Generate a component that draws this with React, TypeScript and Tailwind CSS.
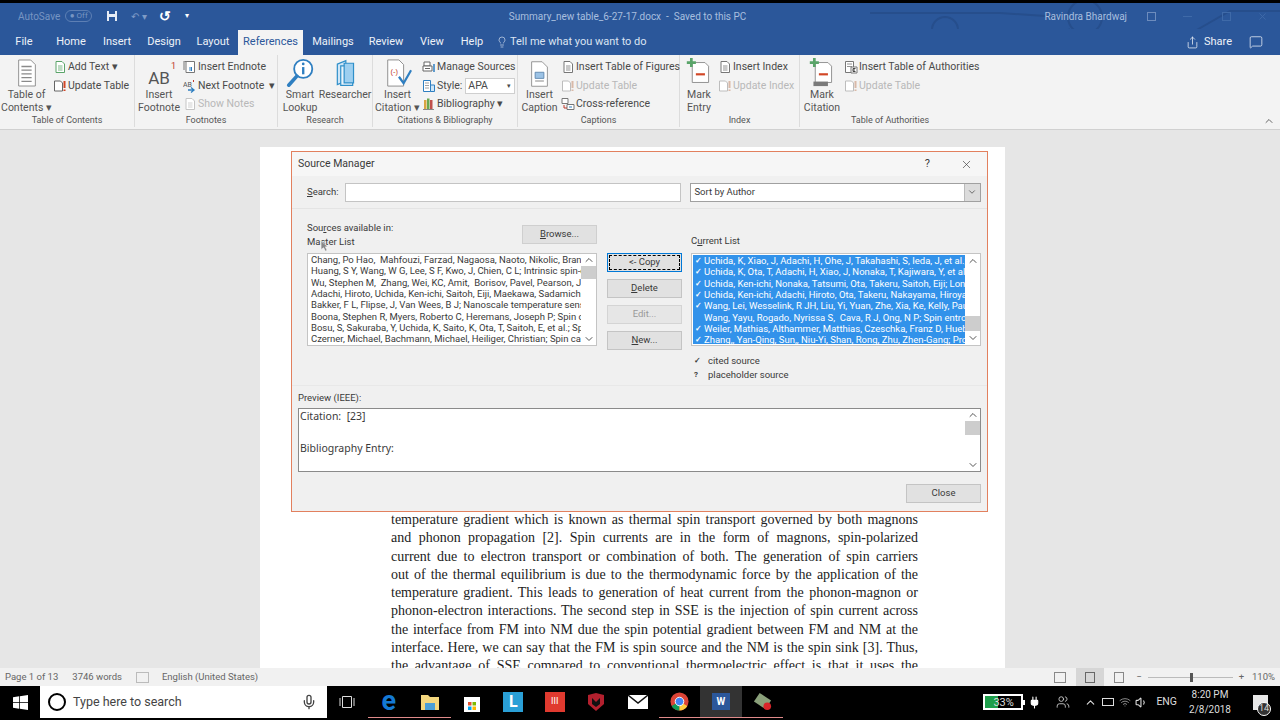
import { ChevronDown, ChevronUp, Lightbulb, MessageSquare, Mic, Plug, Share, Users, Volume1, Wifi, X } from "lucide-react";
import type { ReactNode } from "react";

const tabs = [
  ["Home", "w-[46px]"],
  ["Insert", "w-[46px]"],
  ["Design", "w-[48px]"],
  ["Layout", "w-[50px]"],
];
const tabsAfter = [
  ["Mailings", "w-[60px]"],
  ["Review", "w-[46px]"],
  ["View", "w-[46px]"],
  ["Help", "w-[34px]"],
];

const masterList = [
  "Chang, Po Hao,  Mahfouzi, Farzad, Nagaosa, Naoto, Nikolic, Branislav",
  "Huang, S Y, Wang, W G, Lee, S F, Kwo, J, Chien, C L; Intrinsic spin-dependent",
  "Wu, Stephen M,  Zhang, Wei, KC, Amit,  Borisov, Pavel, Pearson, John E",
  "Adachi, Hiroto, Uchida, Ken-ichi, Saitoh, Eiji, Maekawa, Sadamichi; The",
  "Bakker, F L, Flipse, J, Van Wees, B J; Nanoscale temperature sensing using",
  "Boona, Stephen R, Myers, Roberto C, Heremans, Joseph P; Spin caloritronics",
  "Bosu, S, Sakuraba, Y, Uchida, K, Saito, K, Ota, T, Saitoh, E, et al.; Spin Seebeck",
  "Czerner, Michael, Bachmann, Michael, Heiliger, Christian; Spin caloritronics",
];

const currentList = [
  [true, "Uchida, K, Xiao, J, Adachi, H, Ohe, J, Takahashi, S, Ieda, J, et al.; Spin Seebeck"],
  [true, "Uchida, K, Ota, T, Adachi, H, Xiao, J, Nonaka, T, Kajiwara, Y, et al.; Thermal"],
  [true, "Uchida, Ken-ichi, Nonaka, Tatsumi, Ota, Takeru, Saitoh, Eiji; Longitudinal"],
  [true, "Uchida, Ken-ichi, Adachi, Hiroto, Ota, Takeru, Nakayama, Hiroyasu, Maekawa"],
  [true, "Wang, Lei, Wesselink, R JH, Liu, Yi, Yuan, Zhe, Xia, Ke, Kelly, Paul J; Giant"],
  [false, "Wang, Yayu, Rogado, Nyrissa S,  Cava, R J, Ong, N P; Spin entropy as the"],
  [true, "Weiler, Mathias, Althammer, Matthias, Czeschka, Franz D, Huebl, Hans, Wagner"],
  [true, "Zhang,, Yan-Qing, Sun,, Niu-Yi, Shan, Rong, Zhu, Zhen-Gang; Proximity"],
] as const;

const pageLines = [
  "temperature gradient which is known as thermal spin transport governed by both magnons",
  "and phonon propagation [2]. Spin currents are in the form of magnons, spin-polarized",
  "current due to electron transport or combination of both. The generation of spin carriers",
  "out of the thermal equilibrium is due to the thermodynamic force by the application of the",
  "temperature gradient. This leads to generation of heat current from the phonon-magnon or",
  "phonon-electron interactions. The second step in SSE is the injection of spin current across",
  "the interface from FM into NM due the spin potential gradient between FM and NM at the",
  "interface. Here, we can say that the FM is spin source and the NM is the spin sink [3]. Thus,",
  "the advantage of SSE compared to conventional thermoelectric effect is that it uses the",
];

function DocIcon({ color = "#777" }: { color?: string }) {
  return (
    <svg viewBox="0 0 14 14" className="size-[14px] shrink-0" fill="none" stroke={color}>
      <path d="M3 1.500h6l2.500 2.500v8.500H3z" fill="#fff" />
      <path d="M5 6h4.500M5 8h4.500M5 10h4.500" strokeWidth="0.8" />
    </svg>
  );
}

function UpdateIcon({ disabled }: { disabled?: boolean }) {
  return (
    <svg viewBox="0 0 14 14" className="size-[14px] shrink-0" fill="none">
      <path d="M1.500 2h6l2 2v8h-8z" fill="#fff" stroke={disabled ? "#bdbdbd" : "#666"} />
      <path d="M11.500 2v7M11.500 10.500v1.500" stroke={disabled ? "#d9b9a8" : "#d24726"} strokeWidth="2" />
    </svg>
  );
}

function EndnoteIcon() {
  return (
    <svg viewBox="0 0 14 14" className="size-[14px] shrink-0" fill="none" stroke="#777">
      <path d="M1.500 1.500h9M3 1.500h8.500v11H3z" fill="#fff" />
      <path d="M1 1v9" />
      <path d="M7 7v4M8.500 7v4" stroke="#2f7fc1" />
    </svg>
  );
}

function NextFootnoteIcon() {
  return (
    <svg viewBox="0 0 14 14" className="size-[14px] shrink-0" fill="none">
      <text x="0" y="8" fontSize="7" fill="#555" fontFamily="Roboto, sans-serif">AB</text>
      <path d="M10.500 1v2" stroke="#c0392b" />
      <path d="M5 11h5M8 8.500l3 2.500-3 2.500" stroke="#2f7fc1" strokeWidth="1.300" />
    </svg>
  );
}

function ManageSourcesIcon() {
  return (
    <svg viewBox="0 0 14 14" className="size-[14px] shrink-0" fill="none" stroke="#666">
      <path d="M2 2h6v4H2z" fill="#fff" />
      <path d="M1 6h9v5H1z" fill="#fff" />
      <path d="M3 8.500h5" />
      <path d="M12 4v8" stroke="#2f7fc1" strokeWidth="1.500" />
    </svg>
  );
}

function StyleIcon() {
  return (
    <svg viewBox="0 0 14 14" className="size-[14px] shrink-0" fill="none" stroke="#2f7fc1">
      <path d="M1.500 1.500h7v11h-7z" fill="#fff" />
      <path d="M3 4h4M3 6.500h4M3 9h4" stroke="#888" strokeWidth="0.8" />
      <path d="M8.500 6h4v6.500h-4z" fill="#cfe6f7" />
    </svg>
  );
}

function BibliographyIcon() {
  return (
    <svg viewBox="0 0 14 14" className="size-[14px] shrink-0">
      <path d="M2 3h2.500v9H2z" fill="#d9a441" />
      <path d="M5 1.500h2.500V12H5z" fill="#6aa84f" />
      <path d="M8 3h2.500v9H8z" fill="#c0504d" />
      <path d="M1 12.500h11" stroke="#888" />
    </svg>
  );
}

function CrossRefIcon() {
  return (
    <svg viewBox="0 0 14 14" className="size-[14px] shrink-0" fill="none" stroke="#777">
      <path d="M1 1.500h6v5H1zM6 7.500h7v5H6z" fill="#fff" />
      <path d="M3 8v3h3" stroke="#c0392b" />
      <path d="M8 10h3" stroke="#2f7fc1" />
    </svg>
  );
}

function ToaIcon() {
  return (
    <svg viewBox="0 0 14 14" className="size-[14px] shrink-0" fill="none" stroke="#777">
      <path d="M1.500 1.500h8v11h-8z" fill="#fff" />
      <path d="M3 4h5M3 6.500h5" strokeWidth="0.8" />
      <path d="M7 7h6v6H7z" fill="#fff" />
      <path d="M11.500 8.500H9v3h2.500M9 10h2" stroke="#444" />
    </svg>
  );
}

function BigIcon({ kind }: { kind: string }) {
  if (kind === "toc")
    return (
      <svg viewBox="0 0 28 32" className="h-[30px] w-[26px]" fill="none">
        <path d="M5 2h13l5 5v23H5z" fill="#fff" stroke="#8a8a8a" />
        <path d="M8 9h11M8 13h11M8 17h11M8 21h11M8 25h11" stroke="#8a8a8a" strokeWidth="1.400" />
      </svg>
    );
  if (kind === "footnote")
    return (
      <div className="relative flex h-7 w-7 items-end justify-center text-[17px] leading-[20px] text-[#555]">
        AB
        <span className="absolute top-0 right-[-3px] text-[9px] leading-3 text-[#c0392b]">1</span>
      </div>
    );
  if (kind === "smart")
    return (
      <svg viewBox="0 0 32 34" className="h-[31px] w-[29px]" fill="none">
        <circle cx="19" cy="13" r="10" fill="#fff" stroke="#2f7fc1" strokeWidth="2" />
        <path d="M12 21 3 31" stroke="#2f7fc1" strokeWidth="4" strokeLinecap="round" />
        <path d="M19 11v8" stroke="#2f7fc1" strokeWidth="2.600" />
        <circle cx="19" cy="7.500" r="1.500" fill="#2f7fc1" />
      </svg>
    );
  if (kind === "researcher")
    return (
      <svg viewBox="0 0 28 34" className="h-[29px] w-6" fill="none">
        <path d="M5 6 15 2v24L5 30z" fill="#cfe6f7" stroke="#2f8fc9" strokeWidth="1.400" />
        <path d="M9 8h14v23H9z" fill="#e8f3fb" stroke="#2f8fc9" strokeWidth="1.400" />
        <path d="M13 5h11v23H13z" fill="#9dcff0" stroke="#2f8fc9" strokeWidth="1.400" />
      </svg>
    );
  if (kind === "citation")
    return (
      <svg viewBox="0 0 30 32" className="h-[30px] w-7" fill="none">
        <path d="M4 2h12l5 5v23H4z" fill="#fff" stroke="#8a8a8a" />
        <text x="7" y="17" fontSize="8" fill="#c0392b" fontFamily="Liberation Sans, sans-serif">(-)</text>
        <path d="m16 20 5 7 8-14" stroke="#2f7fc1" strokeWidth="2.400" />
      </svg>
    );
  if (kind === "caption")
    return (
      <svg viewBox="0 0 24 32" className="h-[28px] w-[21px]" fill="none">
        <path d="M3 2h12l6 6v22H3z" fill="#fff" stroke="#8a8a8a" />
        <path d="M7 14h10v7H7z" fill="#9cc3e6" stroke="#5b85ad" />
        <path d="M7 24h10" stroke="#777" />
      </svg>
    );
  return (
    <svg viewBox="0 0 32 34" className="h-[31px] w-[29px]" fill="none">
      <path d="M8 6h14l4 4v18H8z" fill="#fff" stroke="#8a8a8a" />
      <path d="M12 19h10" stroke="#d24726" strokeWidth="2.400" />
      <path d="M7 1v10M2 6h10" stroke="#5aa469" strokeWidth="3" />
      {kind === "markCitation" ? <path d="M6 27h16v5H6z" fill="#7a7a7a" /> : null}
    </svg>
  );
}

function BigButton({ kind, lines, width }: { kind: string; lines: string[]; width: string }) {
  return (
    <div className={`flex shrink-0 flex-col items-center ${width}`}>
      <div className="flex h-[31px] items-end">
        <BigIcon kind={kind} />
      </div>
      <div className="text-center text-[10.5px] leading-[13px] whitespace-nowrap text-[#555]">
        {lines.map((line) => (
          <div key={line}>{line}</div>
        ))}
      </div>
    </div>
  );
}

function SmallRow({ icon, children, disabled }: { icon: ReactNode; children: ReactNode; disabled?: boolean }) {
  return (
    <div
      className={`flex h-[18.5px] items-center gap-[1px] text-[10.5px] whitespace-nowrap ${disabled ? "text-[#b8b8b8]" : "text-[#4a4a4a]"}`}
    >
      {icon}
      <span>{children}</span>
    </div>
  );
}

function RibbonGroup({ label, width, children }: { label: string; width: string; children: ReactNode }) {
  return (
    <div className={`flex h-full shrink-0 flex-col border-r border-[#dcdcdc] ${width}`}>
      <div className="flex flex-1 pt-[2px]">{children}</div>
      <div className="h-[13px] text-center text-[9px] leading-[13px] text-[#555]">{label}</div>
    </div>
  );
}

function Ribbon() {
  return (
    <div className="flex h-[75px] shrink-0 items-stretch border-b border-[#d0d0d0] bg-[#f3f3f3] pb-[2px] shadow-[0_1px_2px_#bbb]">
      <RibbonGroup label="Table of Contents" width="w-[135px]">
        <BigButton kind="toc" lines={["Table of", "Contents ▾"]} width="w-[53px]" />
        <div className="flex flex-col pt-[1px]">
          <SmallRow icon={<DocIcon color="#5aa469" />}>Add Text ▾</SmallRow>
          <SmallRow icon={<UpdateIcon />}>Update Table</SmallRow>
        </div>
      </RibbonGroup>
      <RibbonGroup label="Footnotes" width="w-[143px]">
        <BigButton kind="footnote" lines={["Insert", "Footnote"]} width="w-[48px]" />
        <div className="flex flex-col pt-[1px]">
          <SmallRow icon={<EndnoteIcon />}>Insert Endnote</SmallRow>
          <SmallRow icon={<NextFootnoteIcon />}>Next Footnote &nbsp;▾</SmallRow>
          <SmallRow disabled icon={<DocIcon color="#c4c4c4" />}>Show Notes</SmallRow>
        </div>
      </RibbonGroup>
      <RibbonGroup label="Research" width="w-[95px]">
        <BigButton kind="smart" lines={["Smart", "Lookup"]} width="w-[44px]" />
        <BigButton kind="researcher" lines={["Researcher"]} width="w-[46px]" />
      </RibbonGroup>
      <RibbonGroup label="Citations & Bibliography" width="w-[145px]">
        <BigButton kind="citation" lines={["Insert", "Citation ▾"]} width="w-[49px]" />
        <div className="flex flex-col pt-[1px]">
          <SmallRow icon={<ManageSourcesIcon />}>Manage Sources</SmallRow>
          <SmallRow icon={<StyleIcon />}>
            <span className="flex items-center gap-[3px]">
              Style:
              <span className="flex h-4 w-[50px] items-center justify-between border border-[#cfcfcf] bg-white pr-[3px] pl-[2px]">
                APA <span className="text-[7px]">▾</span>
              </span>
            </span>
          </SmallRow>
          <SmallRow icon={<BibliographyIcon />}>Bibliography ▾</SmallRow>
        </div>
      </RibbonGroup>
      <RibbonGroup label="Captions" width="w-[162px]">
        <BigButton kind="caption" lines={["Insert", "Caption"]} width="w-[43px]" />
        <div className="flex flex-col pt-[1px]">
          <SmallRow icon={<DocIcon />}>Insert Table of Figures</SmallRow>
          <SmallRow disabled icon={<UpdateIcon disabled />}>Update Table</SmallRow>
          <SmallRow icon={<CrossRefIcon />}>Cross-reference</SmallRow>
        </div>
      </RibbonGroup>
      <RibbonGroup label="Index" width="w-[120px]">
        <BigButton kind="mark" lines={["Mark", "Entry"]} width="w-[38px]" />
        <div className="flex flex-col pt-[1px]">
          <SmallRow icon={<DocIcon />}>Insert Index</SmallRow>
          <SmallRow disabled icon={<UpdateIcon disabled />}>Update Index</SmallRow>
        </div>
      </RibbonGroup>
      <div className="flex h-full w-[180px] shrink-0 flex-col">
        <div className="flex flex-1 pt-[2px]">
          <BigButton kind="markCitation" lines={["Mark", "Citation"]} width="w-[44px]" />
          <div className="flex flex-col pt-[1px]">
            <SmallRow icon={<ToaIcon />}>Insert Table of Authorities</SmallRow>
            <SmallRow disabled icon={<UpdateIcon disabled />}>Update Table</SmallRow>
          </div>
        </div>
        <div className="h-[13px] text-center text-[9px] leading-[13px] text-[#555]">Table of Authorities</div>
      </div>
      <div className="flex flex-1 items-end justify-end pr-[5px]">
        <ChevronUp className="size-3 text-[#666]" />
      </div>
    </div>
  );
}

function ScrollBar({ thumbClass, thumbTop }: { thumbClass: string; thumbTop: string }) {
  return (
    <div className="flex w-[15px] shrink-0 flex-col items-center justify-between bg-white">
      <ChevronUp className="size-3 text-[#555]" />
      <div className={`w-full flex-1 ${thumbTop}`}>
        <div className={`w-full bg-[#cdcdcd] ${thumbClass}`} />
      </div>
      <ChevronDown className="size-3 text-[#555]" />
    </div>
  );
}

function DialogButton({ label, disabled, focused }: { label: ReactNode; disabled?: boolean; focused?: boolean }) {
  return (
    <div
      className={`flex h-[19px] w-[75px] items-center justify-center border text-[9.5px] ${
        focused
          ? "border-[#0078d7] bg-[#e1e1e1] outline-1 -outline-offset-3 outline-black outline-dashed"
          : disabled
            ? "border-[#d4d4d4] bg-[#e6e6e6] text-[#999]"
            : "border-[#c4c4c4] bg-[#e1e1e1]"
      }`}
    >
      {label}
    </div>
  );
}

function SourceManager() {
  return (
    <div className="absolute top-[151px] left-[291px] flex h-[361px] w-[697px] flex-col border border-[#e2805e] bg-[#f0f0f0] font-['Roboto',sans-serif] text-[9.5px] text-[#3a3a3a]">
      <div className="flex h-[24px] items-center justify-between bg-[#f6f6f6] pr-[14px] pl-[6px] text-[10.5px]">
        <span>Source Manager</span>
        <span className="flex items-center gap-[30px]">
          <span className="text-[11px]">?</span>
          <X className="size-[13px]" strokeWidth={1.2} />
        </span>
      </div>
      <div className="flex h-[33px] items-center border-b border-[#e4e4e4] pr-[6px] pl-[15px]">
        <span className="w-[38px]"><u>S</u>earch:</span>
        <div className="h-[19px] w-[337px] border border-[#c4c4c4] bg-white" />
        <div className="ml-[9px] flex h-[19px] w-[291px] items-center justify-between border border-[#a0a0a0] bg-white pl-[3px]">
          Sort by Author
          <span className="flex h-full w-[16px] items-center justify-center border-l border-[#bbb] bg-[#dcdcdc]">
            <ChevronDown className="size-[10px] text-[#555]" />
          </span>
        </div>
      </div>
      <div className="flex h-[177px] border-b border-[#e8e8e8] pt-[13px] pr-[6px] pl-[15px]">
        <div className="flex w-[290px] flex-col">
          <div className="flex h-[31px] items-start justify-between">
            <div className="leading-[14px]">
              <div className="mt-[-1px]">Sou<u>r</u>ces available in:</div>
              <div>Master List</div>
            </div>
            <div className="mt-[3px] flex h-[19px] w-[75px] items-center justify-center border border-[#cfcfcf] bg-[#e1e1e1]">
              <span><u>B</u>rowse...</span>
            </div>
          </div>
          <div className="flex h-[93px] border border-[#c4c4c4] bg-white pl-[3px]">
            <div className="min-w-0 flex-1 overflow-hidden leading-[11.35px]">
              {masterList.map((source) => (
                <div key={source} className="whitespace-pre">
                  {source}
                </div>
              ))}
            </div>
            <ScrollBar thumbClass="h-[13px]" thumbTop="" />
          </div>
        </div>
        <div className="ml-[10px] flex w-[74px] flex-col gap-[7px] pt-[31px]">
          <DialogButton focused label="<- Copy" />
          <DialogButton label={<span><u>D</u>elete</span>} />
          <DialogButton disabled label="Edit..." />
          <DialogButton label={<span><u>N</u>ew...</span>} />
        </div>
        <div className="ml-[10px] flex w-[290px] flex-col">
          <div className="flex h-[31px] items-end pb-[5px]"><span>C<u>u</u>rrent List</span></div>
          <div className="flex h-[93px] border border-[#c4c4c4] bg-white p-[1px] pr-0">
            <div className="min-w-0 flex-1 overflow-hidden bg-[#3292ea] pl-[2px] leading-[11.35px] text-white">
              {currentList.map(([cited, source]) => (
                <div key={source} className="flex whitespace-pre">
                  <span className="w-[9px] shrink-0 text-[8px] font-bold">{cited ? "✓" : ""}</span>
                  {source}
                </div>
              ))}
            </div>
            <ScrollBar thumbClass="h-[15px]" thumbTop="pt-[49px]" />
          </div>
          <div className="mt-[8px] pl-[3px] leading-[14px]">
            <div className="flex">
              <span className="w-[14px] text-[8px] font-bold">✓</span>cited source
            </div>
            <div className="flex">
              <span className="w-[14px] text-[8px] font-bold">?</span>placeholder source
            </div>
          </div>
        </div>
      </div>
      <div className="pt-[5px] pr-[6px] pl-[6px]">
        <div className="h-[17px] leading-[13px]">Preview (IEEE):</div>
        <div className="flex h-[64px] border border-[#8a8a8a] bg-white pl-[1px] font-['Noto_Sans',sans-serif] text-[10.5px] leading-[16px]">
          <div className="flex-1 pt-[-1px]">
            <div className="mt-[-1px]">Citation:&nbsp; [23]</div>
            <div className="h-4" />
            <div>Bibliography Entry:</div>
          </div>
          <ScrollBar thumbClass="h-[14px]" thumbTop="" />
        </div>
        <div className="mt-[12px] flex justify-end">
          <DialogButton label="Close" />
        </div>
      </div>
    </div>
  );
}

function TaskIcon({ children, active, open }: { children: ReactNode; active?: boolean; open?: boolean }) {
  return (
    <div
      className={`flex h-full w-[41.5px] items-center justify-center border-b ${active ? "bg-[#333]" : ""} ${active || open ? "border-[#e08a8a]" : "border-transparent"}`}
    >
      {children}
    </div>
  );
}

function Taskbar() {
  return (
    <div className="flex h-[32px] shrink-0 items-center bg-black text-white">
      <div className="flex h-full w-10 items-center justify-center">
        <svg viewBox="0 0 16 16" className="size-[15px]" fill="#fff">
          <path d="M0 2.300 6.500 1.400v6.200H0zM7.300 1.300 16 0v7.600H7.300zM0 8.400h6.500v6.200L0 13.700zM7.300 8.400H16V16l-8.700-1.300z" />
        </svg>
      </div>
      <div className="flex h-full w-[287px] items-center justify-between bg-white pr-[10px] pl-2 text-[#444]">
        <div className="flex items-center gap-[7px] text-[12.5px]">
          <span className="size-[18px] rounded-full border-[2.5px] border-black" />
          Type here to search
        </div>
        <Mic className="size-4 text-[#444]" />
      </div>
      <div className="flex h-full w-10 items-center justify-center">
        <svg viewBox="0 0 16 16" className="size-4" fill="none" stroke="#ddd">
          <path d="M3.500 2.500h9v11h-9zM1 4v8M15 4v8" />
        </svg>
      </div>
      <div className="flex h-full flex-1 items-center pl-[1px]">
        <TaskIcon open>
          <span className="text-[27px] leading-none font-bold text-[#1479d4]">e</span>
        </TaskIcon>
        <TaskIcon open>
          <svg viewBox="0 0 20 18" className="h-[18px] w-5">
            <path d="M1 2h7l2 2h9v13H1z" fill="#f4d77e" />
            <path d="M5 10h10v7H5z" fill="#4a9fd8" />
          </svg>
        </TaskIcon>
        <TaskIcon>
          <svg viewBox="0 0 20 20" className="size-5">
            <path d="M2 5h16v15H2z" fill="#fff" />
            <path d="M6 10h3.500v3.500H6z" fill="#e2502f" />
            <path d="M10.500 10H14v3.500h-3.500z" fill="#7fba00" />
            <path d="M6 14.500h3.500V18H6z" fill="#00a4ef" />
            <path d="M10.500 14.500H14V18h-3.500z" fill="#ffb900" />
          </svg>
        </TaskIcon>
        <TaskIcon>
          <span className="flex h-5 w-5 items-center justify-center bg-[#2a9fd6] text-[16px] leading-none font-bold">L</span>
        </TaskIcon>
        <TaskIcon>
          <span className="flex h-5 w-5 items-center justify-center bg-[#e03a2f] text-[9px]">III</span>
        </TaskIcon>
        <TaskIcon>
          <svg viewBox="0 0 18 20" className="h-5 w-[18px]">
            <path d="M1 3 9 1l8 2v9l-8 7-8-7z" fill="#b3202e" />
            <path d="m5 6 4 4 4-4v6l-4 3-4-3z" fill="#111" />
          </svg>
        </TaskIcon>
        <TaskIcon>
          <svg viewBox="0 0 20 16" className="h-4 w-5">
            <path d="M0 1h20v14H0z" fill="#fff" />
            <path d="m0 1 10 8 10-8" fill="none" stroke="#111" strokeWidth="1.500" />
          </svg>
        </TaskIcon>
        <TaskIcon open>
          <svg viewBox="0 0 20 20" className="size-[19px]">
            <circle cx="10" cy="10" r="9.500" fill="#db4437" />
            <path d="M10 10 1.700 14.800A9.500 9.500 0 0 0 10 19.500z" fill="#0f9d58" />
            <path d="M10 10l8.200 4.800A9.500 9.500 0 0 1 10 19.500z" fill="#ffcd40" />
            <circle cx="10" cy="10" r="4.500" fill="#4285f4" stroke="#fff" />
          </svg>
        </TaskIcon>
        <TaskIcon active>
          <span className="flex h-[17px] w-[18px] items-center justify-center bg-[#2b579a] text-[10px] font-bold">W</span>
        </TaskIcon>
        <TaskIcon open>
          <svg viewBox="0 0 20 20" className="size-[19px]">
            <path d="M7 1 19 9l-6 9L1 10z" fill="#8aa07a" />
            <circle cx="15" cy="15" r="4" fill="#d9252a" />
          </svg>
        </TaskIcon>
      </div>
      <div className="flex h-full items-center text-[#ddd]">
        <div className="flex h-[16px] w-[40px] items-center border-2 border-white text-[11px] leading-none">
          <span className="flex h-full w-[13px] shrink-0 bg-[#1e9e4a]" />
          <span className="ml-[-5px]">33%</span>
        </div>
        <span className="h-[5px] w-[2px] bg-white" />
        <Plug className="ml-[3px] size-[13px] fill-white text-white" />
        <Users className="ml-[15px] size-[14px]" strokeWidth={1.4} />
        <ChevronUp className="ml-[14px] size-[13px]" />
        <span className="ml-[5px] h-[8px] w-[12px] border border-[#ddd]" />
        <Wifi className="ml-[5px] size-[12px] text-[#888]" />
        <Volume1 className="ml-[4px] size-[13px]" />
        <span className="ml-[8px] text-[10.5px]">ENG</span>
        <div className="ml-[14px] flex w-[38px] flex-col items-center text-[10px] leading-[15px]">
          <span>8:20 PM</span>
          <span>2/8/2018</span>
        </div>
        <div className="relative mr-[12px] ml-[24px] h-[15px] w-[15px] bg-[#e8e8e8]">
          <span className="absolute -right-[3px] -bottom-[6px] flex size-[14px] items-center justify-center rounded-full border border-white bg-[#333] text-[9px]">
            14
          </span>
        </div>
      </div>
    </div>
  );
}

export default function App() {
  return (
    <div className="relative flex h-[720px] w-[1280px] flex-col overflow-hidden bg-black font-['Roboto',sans-serif]">
      <div className="relative mt-[3px] flex h-[26px] shrink-0 items-center bg-[#2b579a] text-[10px] text-[#a8bfdf]">
        <svg viewBox="0 0 410 52" className="absolute top-0 right-0 h-[52px] w-[410px]" fill="none" stroke="#264e8c" strokeWidth="2">
          <circle cx="75" cy="27" r="13" />
          <circle cx="215" cy="14" r="17" />
          <path d="M0 10h130l60 4M110 38h70l20-12M290 48l70-40h50M240 44h50" />
        </svg>
        <span className="relative ml-[18px] opacity-60">AutoSave</span>
        <span className="relative ml-[5px] h-3 w-[27px] rounded-full border border-[#7f9bc6] text-center text-[8px] leading-[10px] opacity-60">● Off</span>
        <svg viewBox="0 0 12 12" className="relative ml-[14px] size-3" fill="#e6ecf5">
          <path d="M1 1h10v10H1zM3 1v3h6V1zM3 7v4h6V7z" fillRule="evenodd" />
        </svg>
        <span className="relative ml-[13px] text-[#7f9bc6]">↶ ▾</span>
        <span className="relative ml-[12px] text-[14px] leading-none font-bold text-white">↺</span>
        <span className="relative ml-[14px] text-[8px] text-white">▾</span>
        <span className="relative ml-[320px]">Summary_new table_6-27-17.docx&nbsp; -&nbsp; Saved to this PC</span>
        <span className="relative ml-auto">Ravindra Bhardwaj</span>
        <span className="relative ml-[20px] size-[9px] border border-[#6d8cbd]" />
        <span className="relative ml-[27px] h-[1px] w-[9px] bg-[#3f6aa8]" />
        <span className="relative ml-[30px] size-[9px] border border-[#3f6aa8]" />
        <X className="relative mr-[12px] ml-[26px] size-[11px] text-[#3f6aa8]" />
      </div>
      <div className="relative flex h-[26px] shrink-0 items-stretch bg-[#2b579a] text-[11px] text-[#eef2f8]">
        <span className="flex w-[48px] items-center justify-center">File</span>
        {tabs.map(([tab, width]) => (
          <span key={tab} className={`flex items-center justify-center ${width}`}>
            {tab}
          </span>
        ))}
        <span className="mt-[1px] flex w-[65px] items-center justify-center bg-[#f3f3f3] text-[#2b579a]">References</span>
        {tabsAfter.map(([tab, width]) => (
          <span key={tab} className={`flex items-center justify-center ${width}`}>
            {tab}
          </span>
        ))}
        <span className="ml-[7px] flex items-center gap-[2px] text-[#dbe4f2]">
          <Lightbulb className="size-[12px]" strokeWidth={1.3} />
          Tell me what you want to do
        </span>
        <span className="mr-[17px] ml-auto flex items-center">
          <Share className="size-[13px]" strokeWidth={1.4} />
          <span className="ml-[5px]">Share</span>
          <MessageSquare className="ml-[17px] size-[14px]" strokeWidth={1.3} />
        </span>
      </div>
      <Ribbon />
      <div className="flex min-h-0 flex-1 justify-center bg-[#e6e6e6] pt-[17px] pr-[15px]">
        <div className="h-[600px] w-[745px] shrink-0 bg-white pt-[364px] pl-[131px] font-['Liberation_Serif',serif] text-[14px] leading-[18.25px] text-[#222]">
          <div className="w-[527px]">
            {pageLines.map((line) => (
              <div key={line} className="text-justify [text-align-last:justify]">
                {line}
              </div>
            ))}
          </div>
        </div>
      </div>
      <div className="flex h-[18px] shrink-0 items-center justify-between bg-[#f1f1f1] pr-[5px] pl-[5px] text-[9.5px] text-[#666]">
        <div className="flex items-center">
          <span>Page 1 of 13</span>
          <span className="ml-[14px]">3746 words</span>
          <span className="ml-[14px] h-[11px] w-[13px] border border-[#bbb]" />
          <span className="ml-[13px]">English (United States)</span>
        </div>
        <div className="flex h-full items-center">
          <span className="mr-[10px] h-[11px] w-3 border border-[#888]" />
          <span className="flex h-full w-[28px] items-center justify-center bg-[#d6d6d6]">
            <span className="h-[11px] w-[10px] border border-[#666]" />
          </span>
          <span className="mr-[12px] ml-[10px] h-[11px] w-[10px] border border-[#888]" />
          <span>−</span>
          <span className="relative mx-[6px] h-[1px] w-[85px] bg-[#bbb]">
            <span className="absolute -top-[4px] left-[42px] h-[9px] w-[3px] bg-[#555]" />
          </span>
          <span>+</span>
          <span className="ml-[8px]">110%</span>
        </div>
      </div>
      <Taskbar />
      <div className="h-[2px] shrink-0 bg-black" />
      <SourceManager />
      <svg viewBox="0 0 10 14" className="absolute top-[240px] left-[320px] h-3 w-[9px]">
        <path d="M1 1v10l3-2 2 4 2-1-2-4h3z" fill="#888" stroke="#fff" strokeWidth="0.6" />
      </svg>
    </div>
  );
}
